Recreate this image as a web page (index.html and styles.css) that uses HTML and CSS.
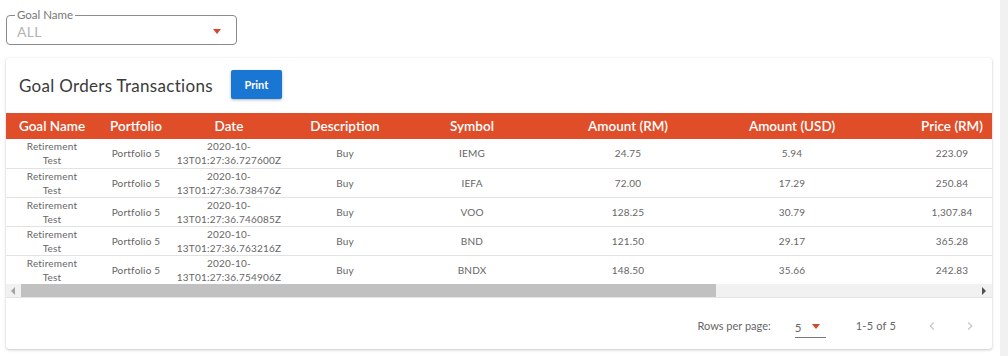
FILE: index.html
```html
<!DOCTYPE html>
<html lang="en">
<head>
  <meta charset="UTF-8" />
  <title>Goal Orders Transactions</title>
  <link rel="stylesheet" href="styles.css">
</head>
<body>
  <div class="page">
    <main class="content">
      <!-- Goal filter -->
      <div class="outlined-select">
        <span class="outlined-label">Goal Name</span>
        <span class="select-value">ALL</span>
        <span class="caret"></span>
      </div>

      <!-- Transactions card -->
      <section class="card">
        <div class="card-header">
          <h2>Goal Orders Transactions</h2>
          <button class="print-btn">Print</button>
        </div>

        <div class="table-wrap">
          <table class="tx-table">
            <colgroup>
              <col style="width:92px"><col style="width:76px"><col style="width:110px"><col style="width:122px">
              <col style="width:132px"><col style="width:180px"><col style="width:148px"><col style="width:172px">
              <col style="width:330px">
            </colgroup>
            <thead>
              <tr>
                <th>Goal Name</th><th>Portfolio</th><th>Date</th><th>Description</th>
                <th>Symbol</th><th>Amount (RM)</th><th>Amount (USD)</th><th>Price (RM)</th><th></th>
              </tr>
            </thead>
            <tbody>
              <tr>
                <td>Retirement<br>Test</td><td>Portfolio 5</td><td>2020-10-<br>13T01:27:36.727600Z</td><td>Buy</td>
                <td>IEMG</td><td>24.75</td><td>5.94</td><td>223.09</td><td></td>
              </tr>
              <tr>
                <td>Retirement<br>Test</td><td>Portfolio 5</td><td>2020-10-<br>13T01:27:36.738476Z</td><td>Buy</td>
                <td>IEFA</td><td>72.00</td><td>17.29</td><td>250.84</td><td></td>
              </tr>
              <tr>
                <td>Retirement<br>Test</td><td>Portfolio 5</td><td>2020-10-<br>13T01:27:36.746085Z</td><td>Buy</td>
                <td>VOO</td><td>128.25</td><td>30.79</td><td>1,307.84</td><td></td>
              </tr>
              <tr>
                <td>Retirement<br>Test</td><td>Portfolio 5</td><td>2020-10-<br>13T01:27:36.763216Z</td><td>Buy</td>
                <td>BND</td><td>121.50</td><td>29.17</td><td>365.28</td><td></td>
              </tr>
              <tr>
                <td>Retirement<br>Test</td><td>Portfolio 5</td><td>2020-10-<br>13T01:27:36.754906Z</td><td>Buy</td>
                <td>BNDX</td><td>148.50</td><td>35.66</td><td>242.83</td><td></td>
              </tr>
            </tbody>
          </table>
        </div>

        <!-- Horizontal scrollbar -->
        <div class="hscroll">
          <span class="arrow arrow-left"></span>
          <div class="track"><div class="thumb"></div></div>
          <span class="arrow arrow-right"></span>
        </div>

        <!-- Pagination -->
        <div class="pagination">
          <span class="rows-label">Rows per page:</span>
          <div class="rows-select">
            <span>5</span>
            <span class="caret small"></span>
          </div>
          <span class="range">1-5 of 5</span>
          <div class="pager">
            <svg width="16" height="16" viewBox="0 0 24 24"><path d="M15.4 7.4 14 6l-6 6 6 6 1.4-1.4L10.8 12z" fill="#c8c8c8"/></svg>
            <svg width="16" height="16" viewBox="0 0 24 24"><path d="M10 6 8.6 7.4 13.2 12l-4.6 4.6L10 18l6-6z" fill="#c8c8c8"/></svg>
          </div>
        </div>
      </section>
    </main>
    <div class="page-track"></div>
  </div>
</body>
</html>
```

FILE: styles.css
```css
/* Reset & Base */
* {
  margin: 0;
  padding: 0;
  box-sizing: border-box;
}

body {
  font-family: 'Lato', 'Open Sans', sans-serif;
  background: #fff;
  color: #555;
  width: 1008px;
  height: 356px;
  overflow: hidden;
}

.page {
  display: flex;
  height: 356px;
}

.content {
  flex: 1;
  padding: 15px 8px 0 6px;
}

.page-track {
  width: 8px;
  background: #f1f1f1;
}

/* Goal select */
.outlined-select {
  position: relative;
  width: 231px;
  height: 30px;
  border: 1px solid #8a8a8a;
  border-radius: 4px;
  display: flex;
  align-items: center;
  padding: 2px 15px 0 10px;
}

.outlined-label {
  position: absolute;
  top: -7px;
  left: 8px;
  padding: 0 2px;
  background: #fff;
  font-size: 11.5px;
  line-height: 12px;
  color: #777;
}

.select-value {
  flex: 1;
  font-size: 14px;
  color: #b3b3b3;
  letter-spacing: 0.3px;
}

.caret {
  width: 0;
  height: 0;
  border-left: 4px solid transparent;
  border-right: 4px solid transparent;
  border-top: 5px solid #d9472a;
}

/* Card */
.card {
  margin-top: 13px;
  width: 986px;
  height: 291px;
  background: #fff;
  border-radius: 3px;
  box-shadow: 0 1px 3px rgba(0, 0, 0, 0.22), 0 0 1px rgba(0, 0, 0, 0.08);
  display: flex;
  flex-direction: column;
  overflow: hidden;
}

.card-header {
  height: 55px;
  display: flex;
  align-items: center;
  padding: 0 13px;
  gap: 18px;
}

.card-header h2 {
  font-size: 17px;
  font-weight: 400;
  color: #3a3a3a;
  letter-spacing: 0.3px;
}

.print-btn {
  width: 51px;
  height: 29px;
  margin-top: -2px;
  border: none;
  border-radius: 2px;
  background: #1976d2;
  color: #fff;
  font-family: inherit;
  font-size: 11px;
  font-weight: 700;
  box-shadow: 0 1px 3px rgba(0, 0, 0, 0.3);
}

/* Table */
.table-wrap {
  overflow: hidden;
}

.tx-table {
  table-layout: fixed;
  width: 1362px;
  border-collapse: collapse;
}

.tx-table th {
  height: 26px;
  background: #df4d29;
  color: #fff;
  font-size: 13.5px;
  font-weight: 600;
  text-align: center;
  white-space: nowrap;
  padding: 0 4px;
}

.tx-table td {
  height: 29px;
  font-size: 10px;
  line-height: 14px;
  color: #666;
  text-align: center;
  border-bottom: 1px solid #e2e2e2;
  padding: 0 2px;
  letter-spacing: 0.2px;
}

.tx-table tbody tr:last-child td {
  border-bottom: none;
}

/* Horizontal scrollbar */
.hscroll {
  height: 14px;
  display: flex;
  align-items: center;
  background: #f1f1f1;
  border-bottom: 1px solid #e4e4e4;
}

.arrow {
  width: 0;
  height: 0;
  border-top: 4px solid transparent;
  border-bottom: 4px solid transparent;
}

.arrow-left {
  margin: 0 6px 0 5px;
  border-right: 4px solid #a3a3a3;
}

.arrow-right {
  margin: 0 6px 0 8px;
  border-left: 4px solid #505050;
}

.track {
  flex: 1;
  height: 100%;
}

.thumb {
  width: 695px;
  height: 100%;
  background: #c1c1c1;
}

/* Pagination */
.pagination {
  flex: 1;
  display: flex;
  align-items: center;
  justify-content: flex-end;
  padding: 4px 14px 0 0;
  font-size: 11px;
  color: #666;
}

.rows-select {
  display: flex;
  align-items: center;
  gap: 11px;
  width: 31px;
  height: 24px;
  margin: 0 30px 0 24px;
  padding-top: 4px;
  border-bottom: 1px solid #777;
  font-size: 11.5px;
}

.caret.small {
  margin-top: -2px;
}

.range {
  margin-right: 28px;
  letter-spacing: 0.2px;
}

.pager {
  display: flex;
  gap: 22px;
}
```
